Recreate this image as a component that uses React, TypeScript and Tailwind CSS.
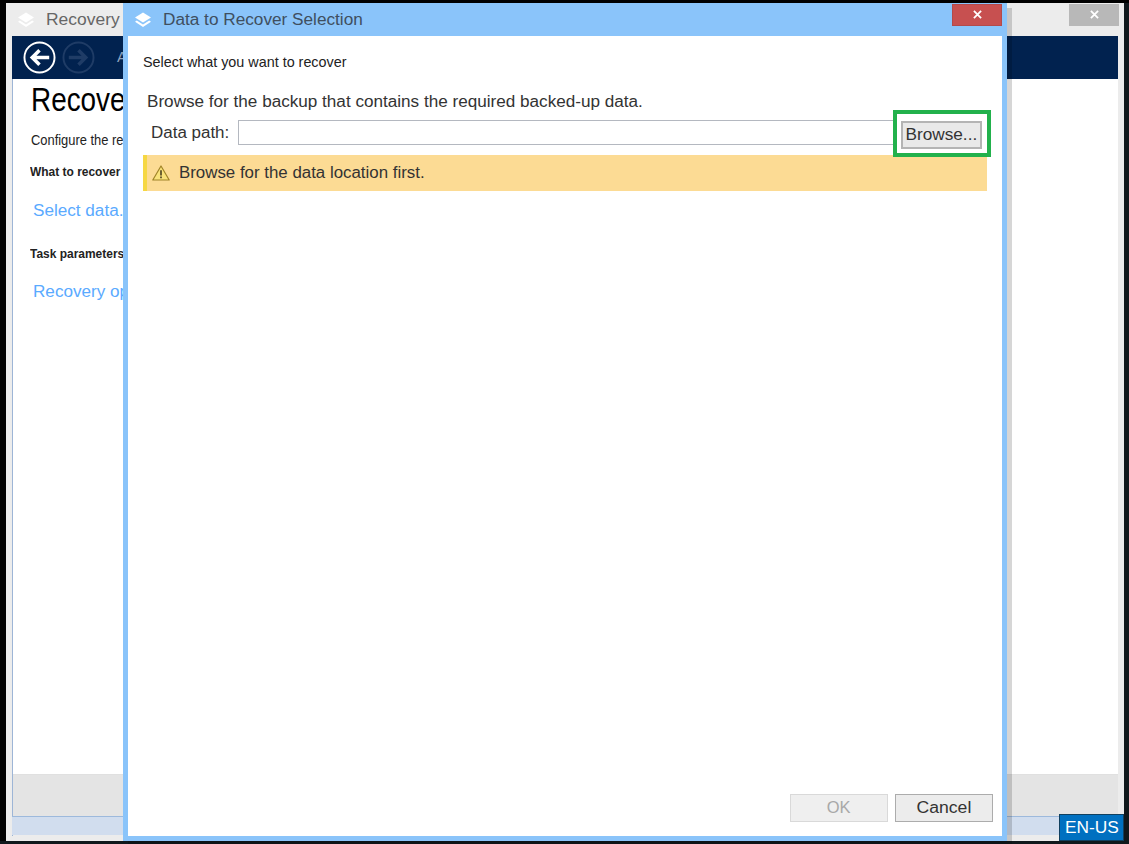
import React from 'react';

const LayersLogo = ({ className }: { className?: string }) => (
  <svg viewBox="0 0 18 18" className={className} fill="currentColor">
    <path d="M9 1.5 17 6.5 9 11.5 1 6.5Z" />
    <path d="M2.8 9.6 9 13.4 15.2 9.6 17 10.8 9 16 1 10.8Z" />
  </svg>
);

const NavCircle = ({ dir, className }: { dir: 'left' | 'right'; className?: string }) => (
  <svg viewBox="0 0 34 34" className={className} fill="none" stroke="currentColor">
    <circle cx="17" cy="17" r="15.5" strokeWidth="2" />
    {dir === 'left' ? (
      <path d="M27 17H10M17 9.5 9.5 17 17 24.5" strokeWidth="3.6" />
    ) : (
      <path d="M7 17H24M17 9.5 24.5 17 17 24.5" strokeWidth="3.6" />
    )}
  </svg>
);

const CloseGlyph = () => (
  <svg viewBox="0 0 10 10" className="w-[9px] h-[9px]" fill="none" stroke="white" strokeWidth="2">
    <path d="M1 1 9 9M9 1 1 9" />
  </svg>
);

const WarningIcon = () => (
  <svg viewBox="0 0 18 16" className="w-[18px] h-[16px]">
    <path d="M9 1 17.2 15H.8Z" fill="#f9e27a" stroke="#a08428" strokeWidth="1.2" strokeLinejoin="round" />
    <path d="M9 5.2V10.4M9 11.6V13.2" stroke="#4a4020" strokeWidth="1.6" />
  </svg>
);

const BackgroundWindow = () => (
  <div className="ml-[6px] mt-[3px] w-[1118px] h-[838px] bg-[#ececec] flex flex-col">
    <div className="h-[33px] flex items-center shrink-0 relative">
      <LayersLogo className="ml-[11px] w-[18px] h-[18px] text-white" />
      <span className="ml-[11px] text-[16px] text-[#666] origin-left scale-x-[1.09]">Recovery</span>
      <div className="ml-auto mr-[5px] mb-[10px] w-[50px] h-[22px] bg-[#b8b8b8] flex items-center justify-center">
        <CloseGlyph />
      </div>
    </div>
    <div className="mx-[6px] flex-1 flex flex-col border-l border-[#9db5d6]">
      <div className="h-[43px] bg-[#01224f] flex items-center shrink-0 -ml-px">
        <NavCircle dir="left" className="ml-[11px] w-[33px] h-[33px] text-white" />
        <NavCircle dir="right" className="ml-[6px] w-[33px] h-[33px] text-[#1f3c66]" />
        <span className="ml-[22px] text-[15px] text-[#8fa3bd]">A</span>
      </div>
      <div className="h-[695px] bg-white shrink-0 pl-[18px]">
        <div className="text-[34px] leading-[40px] text-black origin-left scale-x-[0.82]">Recover</div>
        <div className="mt-[11px] text-[15px] leading-[20px] text-[#222] origin-left scale-x-[0.86]">Configure the re</div>
        <div className="mt-[14px] -ml-px text-[13px] leading-[16px] font-bold text-[#222] origin-left scale-x-[0.92]">What to recover</div>
        <div className="mt-[21px] ml-[2px] text-[16px] leading-[20px] text-[#5aaaff] origin-left scale-x-[1.07]">Select data...</div>
        <div className="mt-[25px] -ml-px text-[13px] leading-[16px] font-bold text-[#222] origin-left scale-x-[0.92]">Task parameters</div>
        <div className="mt-[20px] ml-[2px] text-[16px] leading-[20px] text-[#5aaaff] origin-left scale-x-[1.07]">Recovery op</div>
      </div>
      <div className="h-[42px] bg-[#e4e4e4] border-t border-[#e0e0e0] shrink-0" />
      <div className="h-[19px] bg-[#d1ddee] border-t border-[#9db9dc] -ml-px shrink-0" />
    </div>
    <div className="h-[5px] shrink-0" />
  </div>
);

const Dialog = () => (
  <div className="absolute left-[123px] top-[3px] w-[884px] h-[838px] bg-[#8ac4fa] flex flex-col shadow-[5px_5px_0_0_rgba(0,0,0,0.16)]">
    <div className="h-[33px] flex items-center shrink-0">
      <LayersLogo className="ml-[11px] w-[18px] h-[18px] text-white" />
      <span className="ml-[11px] text-[16px] text-[#3f4f60] origin-left scale-x-[1.075]">Data to Recover Selection</span>
      <div className="ml-auto mr-[5px] mb-[10px] w-[50px] h-[22px] bg-[#c75050] border border-[#b34a4a] flex items-center justify-center">
        <CloseGlyph />
      </div>
    </div>
    <div className="mx-[5px] mb-[5px] flex-1 bg-white flex flex-col relative">
      <div className="ml-[15px] mt-[16px] text-[15px] leading-[20px] text-[#222] origin-left scale-x-[0.957]">Select what you want to recover</div>
      <div className="ml-[19px] mt-[20px] text-[16px] leading-[20px] text-[#333] origin-left scale-x-[1.07]">Browse for the backup that contains the required backed-up data.</div>
      <div className="flex items-center ml-[23px] mt-[8px] h-[25px]">
        <span className="text-[16px] text-[#333] w-[87px] origin-left scale-x-[1.06]">Data path:</span>
        <div className="w-[656px] h-[25px] bg-white border border-[#b4b8c0]" />
      </div>
      <div className="ml-[15px] mt-[10px] w-[844px] h-[36px] bg-[#fcdb94] border-l-[4px] border-[#f6d743] flex items-center">
        <span className="ml-[5px]"><WarningIcon /></span>
        <span className="ml-[9px] text-[16px] text-[#333] origin-left scale-x-[1.054]">Browse for the data location first.</span>
      </div>
      <div className="mt-auto mb-[14px] mr-[9px] flex justify-end gap-[7px]">
        <div className="w-[98px] h-[28px] bg-[#efefef] border border-[#d9d9d9] flex items-center justify-center text-[16px] text-[#a8a8a8]">
          <span className="scale-x-[1.03]">OK</span>
        </div>
        <div className="w-[98px] h-[28px] bg-[#ececec] border border-[#acacac] flex items-center justify-center pb-px text-[16px] text-[#333]">
          <span className="scale-x-[1.1]">Cancel</span>
        </div>
      </div>
      {/* highlight drawn on top of the screenshot */}
      <div className="absolute left-[765px] top-[74px] w-[98px] h-[47px] border-[4px] border-[#22b14c] bg-white flex items-start pl-[4px] pt-[7px]">
        <div className="w-[81px] h-[28px] bg-[#e9e9e9] border-2 border-[#b4b4b4] flex items-center justify-center text-[16px] text-[#333]">
          <span className="scale-x-[1.075]">Browse...</span>
        </div>
      </div>
    </div>
  </div>
);

export default function App() {
  return (
    <div className="relative w-[1129px] h-[844px] bg-[#10181c] overflow-hidden font-['Liberation_Sans',Arial,sans-serif]">
      <div className="absolute left-0 top-0 w-[6px] h-[841px] bg-black" />
      <div className="absolute left-0 top-0 w-full h-[3px] bg-black" />
      <BackgroundWindow />
      <Dialog />
      <div className="absolute left-[1059px] top-[814px] w-[65px] h-[27px] bg-[#0070c0] border border-[#10405f] flex items-center justify-center text-[16px] text-white">
        <span className="scale-x-[1.08]">EN-US</span>
      </div>
    </div>
  );
}
